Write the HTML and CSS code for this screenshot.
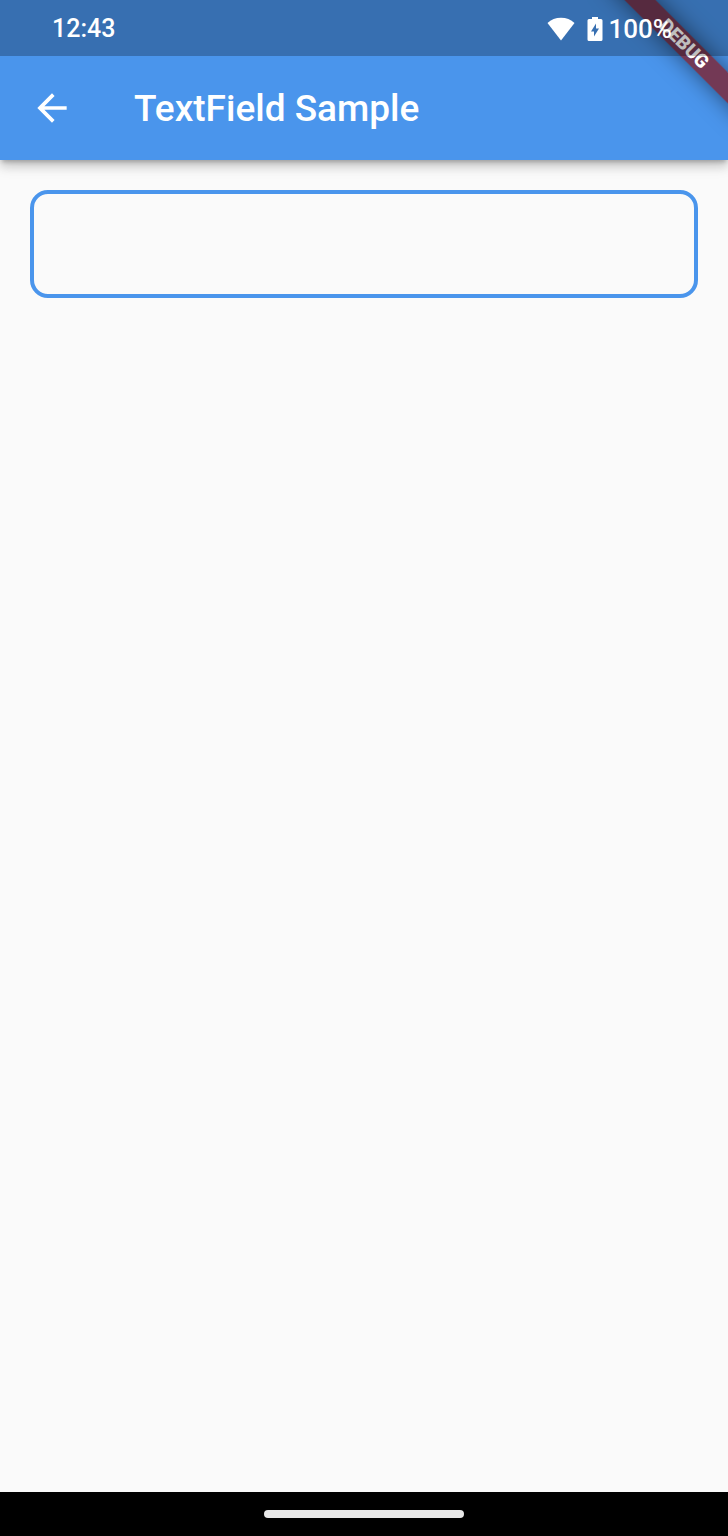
FILE: index.html
```html
<!DOCTYPE html>
<html lang="en">
<head>
  <meta charset="UTF-8">
  <title>TextField Sample</title>
  <meta name="viewport" content="width=device-width, initial-scale=1.0">
  <link rel="stylesheet" href="styles.css">
</head>
<body>
  <header class="app-bar">
    <button class="back" type="button" aria-label="Back">
      <svg viewBox="0 0 24 24" width="44" height="44">
        <path d="M20 11H7.83l5.590-5.590L12 4l-8 8 8 8 1.410-1.410L7.830 13H20v-2z" fill="#fff"/>
      </svg>
    </button>
    <h1 class="title">TextField Sample</h1>
  </header>

  <main class="content">
    <input class="text-field" type="text" aria-label="Text field">
  </main>

  <footer class="nav-bar">
    <div class="handle"></div>
  </footer>

  <!-- debug ribbon, sits under the translucent status bar -->
  <div class="banner">
    <span class="ribbon">DEBUG</span>
  </div>

  <div class="status-bar">
    <span class="clock">12:43</span>
    <div class="status-icons">
      <svg class="wifi" viewBox="0 0 28 24" width="28" height="24">
        <path d="M14 23.500L.5 6C4 2.500 8.800.7 14 .7S24 2.500 27.500 6z" fill="#fff"/>
      </svg>
      <svg class="battery" viewBox="0 0 16 26" width="16" height="26">
        <path fill-rule="evenodd" d="M5 1h6v2h3q1.500 0 1.500 1.500v19q0 1.500-1.500 1.500H2Q.5 25 .5 23.500v-19Q.5 3 2 3h3zM9 7.500L4 15.500h3v5L12 12.500H9z" fill="#fff"/>
      </svg>
      <span class="percent">100%</span>
    </div>
  </div>
</body>
</html>
```

FILE: styles.css
```css
* {
  box-sizing: border-box;
}
body {
  position: relative;
  margin: 0;
  min-height: 100vh;
  display: flex;
  flex-direction: column;
  background: #fafafa;
  font-family: Roboto, Arial, sans-serif;
  overflow-x: hidden;
}
.app-bar {
  display: flex;
  align-items: center;
  gap: 60px;
  padding: 56px 30px 0;
  height: 160px;
  background: #4a95ec;
  color: #fff;
  box-shadow: 0 4px 4px -2px rgba(0,0,0,0.2), 0 7px 9px rgba(0,0,0,0.14), 0 2px 18px rgba(0,0,0,0.12);
}
.back {
  display: flex;
  padding: 0;
  border: 0;
  background: none;
  cursor: pointer;
}
.title {
  margin: 0;
  padding-top: 2px;
  font-size: 37px;
  line-height: 44px;
  font-weight: 500;
}
.content {
  flex: 1;
  padding: 30px;
}
.text-field {
  display: block;
  width: 100%;
  height: 108px;
  padding: 0 22px;
  border: 4px solid #4a95ec;
  border-radius: 18px;
  outline: none;
  background: transparent;
  font: inherit;
  font-size: 30px;
}
.nav-bar {
  display: flex;
  align-items: center;
  justify-content: center;
  height: 44px;
  background: #000;
}
.handle {
  width: 200px;
  height: 8px;
  border-radius: 4px;
  background: #e8e8e8;
}
.banner {
  position: absolute;
  top: 0;
  right: 0;
  width: 160px;
  height: 160px;
  overflow: hidden;
  pointer-events: none;
}
.ribbon {
  position: absolute;
  top: 33px;
  right: -56px;
  width: 200px;
  background: rgba(136,14,14,0.68);
  box-shadow: 0 0 22px rgba(0,0,0,0.5);
  color: #fff;
  font-size: 19px;
  line-height: 22px;
  font-weight: 900;
  text-align: center;
  transform: rotate(45deg);
}
.status-bar {
  position: absolute;
  top: 0;
  left: 0;
  right: 0;
  display: flex;
  align-items: center;
  justify-content: space-between;
  height: 56px;
  padding: 2px 52px 0;
  background: rgba(0,0,0,0.25);
  color: #fff;
  font-size: 26px;
  line-height: 32px;
  font-weight: 500;
}
.clock {
  font-size: 25px;
}
.status-icons {
  display: flex;
  align-items: center;
  margin-right: 4px;
}
.battery {
  margin: 0 6px 0 12px;
}
```
